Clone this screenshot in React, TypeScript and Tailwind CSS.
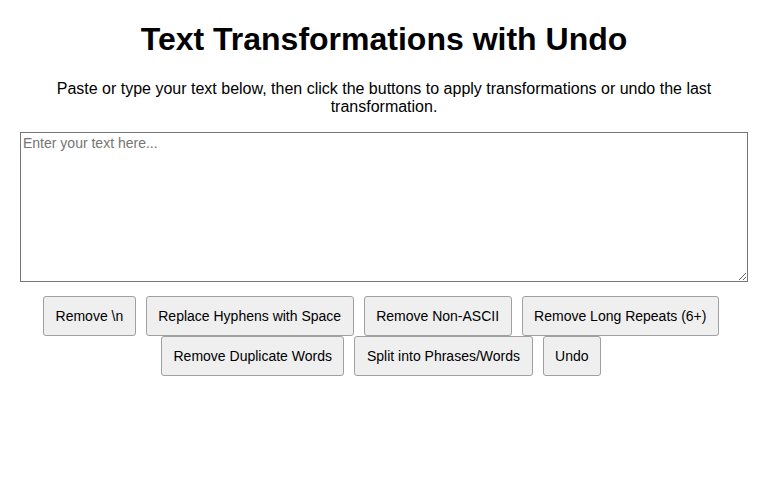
import { useState } from 'react';

const ops = [
  'Remove \\n',
  'Replace Hyphens with Space',
  'Remove Non-ASCII',
  'Remove Long Repeats (6+)',
  'Remove Duplicate Words',
  'Split into Phrases/Words',
];

export default function App() {
  const [text, setText] = useState('');

  return (
    <div className="min-h-screen bg-white px-5 pt-[21px] pb-5 text-black font-['Liberation_Sans',Arial,sans-serif]">
      <h1 className="mb-[22px] text-center text-[32px] font-bold leading-[37px]">
        Text Transformations with Undo
      </h1>
      <p className="mb-4 text-center text-base leading-[18px]">
        Paste or type your text below, then click the buttons to apply transformations or undo the last transformation.
      </p>
      <textarea
        value={text}
        onChange={(e) => setText(e.target.value)}
        placeholder="Enter your text here..."
        className="block h-[150px] w-full resize-y border border-[#767676] bg-white p-[2px] text-sm leading-4 placeholder:text-[#757575] font-['Liberation_Sans',Arial,sans-serif]"
      />
      <div className="mt-[14px] flex flex-wrap justify-center">
        {[...ops, 'Undo'].map((label) => (
          <button
            key={label}
            className="ml-[2px] mr-[8px] rounded-[3px] border border-[#a0a0a0] bg-[#efefef] px-[11.5px] py-[11px] text-sm leading-4 text-black"
          >
            {label}
          </button>
        ))}
      </div>
    </div>
  );
}
